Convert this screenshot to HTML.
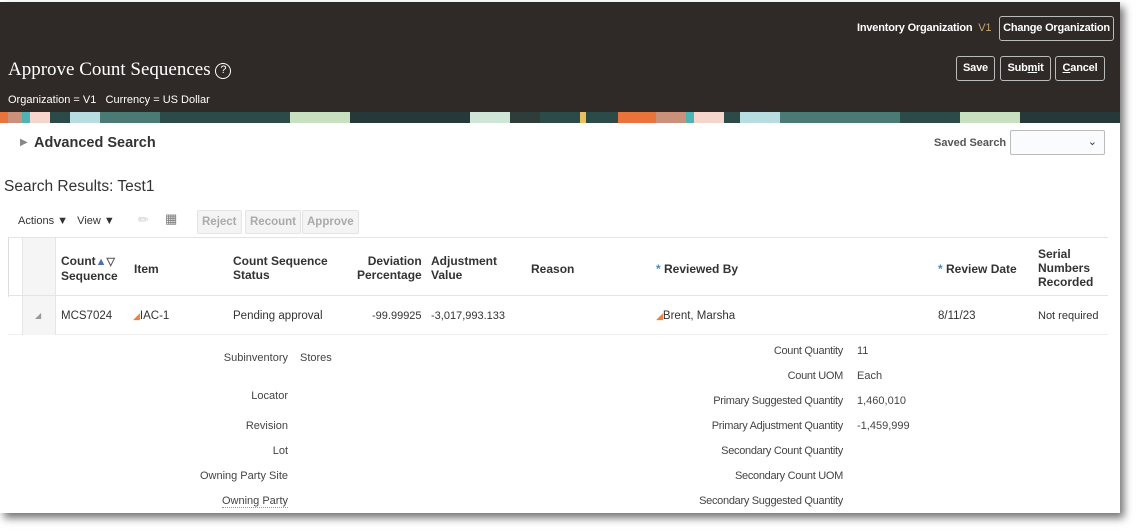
<!DOCTYPE html>
<html><head><meta charset="utf-8"><style>
*{box-sizing:border-box;margin:0;padding:0}
body{width:1139px;height:531px;background:#fff;font-family:"Liberation Sans",Arial,sans-serif;position:relative;overflow:hidden;color:#333}
.page{position:absolute;left:0;top:2px;width:1120px;height:511px;background:#fff;box-shadow:4px 5px 8px rgba(0,0,0,.55);overflow:hidden}
.hdr{position:absolute;left:0;top:0;width:1120px;height:110px;background:#2f2a27;color:#fff}
.t{position:absolute;white-space:nowrap}
.btn{position:absolute;border:1px solid #bbb;border-radius:3px;color:#fff;font-weight:bold;font-size:11px;text-align:center;line-height:23px;height:25px;white-space:nowrap;letter-spacing:-.2px}
.ban{position:absolute;left:0;top:110px;width:1120px;height:11px}
.g{font-size:11.5px;color:#333}
.b{font-weight:bold;color:#333;font-size:12px}
.tb{position:absolute;height:24px;top:208px;border:1px solid #e4e4e4;background:#f4f4f4;color:#aaa;font-size:11.5px;font-weight:bold;line-height:22px;padding:0 4px;border-radius:2px}
.lbl{position:absolute;font-size:11px;color:#444;text-align:right;white-space:nowrap}
.val{position:absolute;font-size:11px;color:#444;white-space:nowrap}
</style></head><body>
<div class="page">
<div class="hdr">
 <div class="t" style="left:857px;top:20px;font-size:11px;font-weight:bold;letter-spacing:-.2px">Inventory Organization <span style="color:#c8a56a;font-weight:normal;margin-left:3px">V1</span></div>
 <div class="btn" style="left:999px;top:14px;width:115px">Change Organization</div>
 <div class="t" style="left:8px;top:57px;font-family:'Liberation Serif',serif;font-size:19px">Approve Count Sequences <span style="display:inline-block;width:16px;height:16px;border:1.5px solid #fff;border-radius:50%;font-family:'Liberation Sans';font-size:11px;text-align:center;line-height:13px;vertical-align:2px">?</span></div>
 <div class="btn" style="left:956px;top:54px;width:39px">Save</div>
 <div class="btn" style="left:1000px;top:54px;width:51px">Sub<u>m</u>it</div>
 <div class="btn" style="left:1055px;top:54px;width:50px"><u>C</u>ancel</div>
 <div class="t" style="left:8px;top:92px;font-size:11px">Organization = V1&nbsp;&nbsp; Currency = US Dollar</div>
</div>
<svg class="ban" viewBox="0 0 1120 11" preserveAspectRatio="none">
<rect width="1120" height="11" fill="#2c4a48"/>
<rect x="0" width="8" height="11" fill="#e8743b"/><rect x="8" width="14" height="11" fill="#c9907a"/><rect x="22" width="8" height="11" fill="#4fb3b3"/><rect x="30" width="20" height="11" fill="#f6d6cc"/><rect x="70" width="30" height="11" fill="#b7dde0"/><rect x="100" width="60" height="11" fill="#4a7a74"/><rect x="290" width="60" height="11" fill="#c9e0c0"/><rect x="350" width="120" height="11" fill="#253a38"/><rect x="470" width="40" height="11" fill="#cfe5d8"/><rect x="510" width="30" height="11" fill="#2e3c3a"/><rect x="580" width="6" height="11" fill="#e8c060"/><rect x="618" width="38" height="11" fill="#e8743b"/><rect x="656" width="30" height="11" fill="#c9907a"/><rect x="686" width="8" height="11" fill="#4fb3b3"/><rect x="694" width="30" height="11" fill="#f6d6cc"/><rect x="740" width="40" height="11" fill="#b7dde0"/><rect x="780" width="120" height="11" fill="#4a7a74"/><rect x="960" width="60" height="11" fill="#c9e0c0"/><rect x="1020" width="100" height="11" fill="#253a38"/>
</svg>
<div class="t" style="left:20px;top:135px;font-size:10px;color:#888">&#9654;</div>
<div class="t b" style="left:34px;top:133px;font-size:14.5px">Advanced Search</div>
<div class="t" style="left:934px;top:135px;font-size:11px;color:#555;font-weight:bold">Saved Search</div>
<div style="position:absolute;left:1010px;top:128px;width:95px;height:25px;border:1px solid #bbb;border-radius:2px;background:#f9fbfd"><span style="position:absolute;right:7px;top:4px;font-size:11px;color:#333">&#8964;</span></div>
<div class="t" style="left:4px;top:176px;font-size:15.5px;color:#333">Search Results: Test1</div>
<div class="t g" style="left:18px;top:213px;font-size:11px">Actions &#9660;&nbsp;&nbsp; View &#9660;</div>
<div class="t" style="left:138px;top:210px;color:#ccc;font-size:13px">&#9999;</div>
<div class="t" style="left:165px;top:209px;color:#777;font-size:13px">&#9638;</div>
<div class="tb" style="left:197px">Reject</div>
<div class="tb" style="left:245px">Recount</div>
<div class="tb" style="left:302px">Approve</div>
<div style="position:absolute;left:8px;top:235px;width:1100px;height:98px;border-top:1px solid #e4e4e4;border-bottom:1px solid #eee"></div>
<div style="position:absolute;left:8px;top:235px;width:1px;height:60px;background:#ddd"></div>
<div style="position:absolute;left:22px;top:236px;width:34px;height:97px;background:#f5f5f5;border-left:1px solid #e6e6e6;border-right:1px solid #e6e6e6"></div>
<div style="position:absolute;left:8px;top:293px;width:1100px;height:1px;background:#e4e4e4"></div>
<div class="t b" style="left:61px;top:252px;line-height:14px">Count<span style="color:#4d6fb8;font-size:11px">&#9650;</span><span style="color:#555;font-size:11px">&#9661;</span><br>Sequence</div>
<div class="t b" style="left:134px;top:260px">Item</div>
<div class="t b" style="left:233px;top:252px;line-height:14px">Count Sequence<br>Status</div>
<div class="t b" style="left:357px;top:252px;line-height:14px;text-align:right">Deviation<br>Percentage</div>
<div class="t b" style="left:431px;top:252px;line-height:14px">Adjustment<br>Value</div>
<div class="t b" style="left:531px;top:260px">Reason</div>
<div class="t b" style="left:656px;top:260px"><span style="color:#4a88c0">*</span> Reviewed By</div>
<div class="t b" style="left:938px;top:260px"><span style="color:#4a88c0">*</span> Review Date</div>
<div class="t b" style="left:1038px;top:245px;line-height:14px">Serial<br>Numbers<br>Recorded</div>
<div class="t" style="left:35px;top:309px;font-size:8px;color:#999">&#9698;</div>
<div class="t g" style="left:61px;top:308px">MCS7024</div>
<div class="t g" style="left:133px;top:308px"><span style="color:#f08040;font-size:9px">&#9698;</span>IAC-1</div>
<div class="t g" style="left:233px;top:308px">Pending approval</div>
<div class="t g" style="left:372px;top:308px;font-size:11px">-99.99925</div>
<div class="t g" style="left:431px;top:308px;font-size:11px">-3,017,993.133</div>
<div class="t g" style="left:656px;top:308px"><span style="color:#f08040;font-size:9px">&#9698;</span>Brent, Marsha</div>
<div class="t g" style="left:938px;top:308px">8/11/23</div>
<div class="t g" style="left:1038px;top:308px;font-size:11px">Not required</div>
<div class="lbl" style="right:832px;top:350px">Subinventory</div><div class="val" style="left:300px;top:350px">Stores</div>
<div class="lbl" style="right:832px;top:388px">Locator</div>
<div class="lbl" style="right:832px;top:418px">Revision</div>
<div class="lbl" style="right:832px;top:443px">Lot</div>
<div class="lbl" style="right:832px;top:468px">Owning Party Site</div>
<div class="lbl" style="right:832px;top:493px;border-bottom:1px dotted #999">Owning Party</div>
<div class="lbl" style="right:277px;top:343px;letter-spacing:-.3px">Count Quantity</div><div class="val" style="left:857px;top:343px">11</div>
<div class="lbl" style="right:277px;top:368px;letter-spacing:-.3px">Count UOM</div><div class="val" style="left:857px;top:368px">Each</div>
<div class="lbl" style="right:277px;top:393px;letter-spacing:-.3px">Primary Suggested Quantity</div><div class="val" style="left:857px;top:393px">1,460,010</div>
<div class="lbl" style="right:277px;top:418px;letter-spacing:-.3px">Primary Adjustment Quantity</div><div class="val" style="left:857px;top:418px">-1,459,999</div>
<div class="lbl" style="right:277px;top:443px;letter-spacing:-.3px">Secondary Count Quantity</div>
<div class="lbl" style="right:277px;top:468px;letter-spacing:-.3px">Secondary Count UOM</div>
<div class="lbl" style="right:277px;top:493px;letter-spacing:-.3px">Secondary Suggested Quantity</div>
</div>
</body></html>
